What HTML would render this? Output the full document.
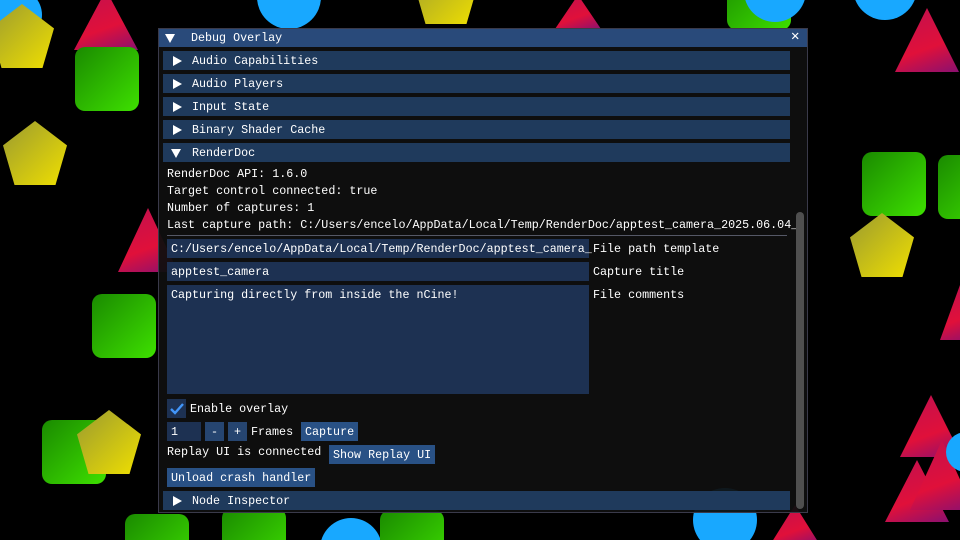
<!DOCTYPE html>
<html style="width:960px;height:540px;overflow:hidden"><head><meta charset="utf-8"><style>
*{margin:0;padding:0;box-sizing:border-box}
body{width:960px;height:540px;background:#000;position:relative;overflow:hidden;font-family:"Liberation Mono","DejaVu Sans Mono",monospace;font-size:11.7px;color:#fff}
.a{position:absolute}
.sq{position:absolute;width:64px;height:64px;border-radius:10px;background:linear-gradient(135deg,#1a8a00,#3ee000)}
.ci{position:absolute;border-radius:50%;background:#18a8ff}
.pent{position:absolute;width:64px;height:64px;background:linear-gradient(135deg,#9a9a30,#f0e000);clip-path:polygon(50% 0,100% 38%,82% 100%,18% 100%,0 38%)}
.rt{position:absolute;background:linear-gradient(160deg,#c01050,#e0103a 60%,#8a1070);clip-path:polygon(50% 0,100% 100%,0 100%)}
.win{position:absolute;left:158px;top:28px;width:650px;height:485px;background:rgba(15,15,15,.94);border:1px solid #3a3a4a}
.tb{position:absolute;left:0;top:0;width:648px;height:18px;background:#294a7a}
.hd{position:absolute;left:4px;width:627px;height:19px;background:#1f3a5c}
.t{position:absolute;white-space:pre;line-height:14px}
.in{position:absolute;background:#1d3152}
.btn{position:absolute;background:#295185;height:19px}
.arr{position:absolute;width:0;height:0;border-top:5px solid transparent;border-bottom:5px solid transparent;border-left:9px solid #fff}
.dn{position:absolute;width:0;height:0;border-left:5px solid transparent;border-right:5px solid transparent;border-top:9px solid #fff}
</style></head><body>
<div class="ci" style="left:-12px;top:-12px;width:54px;height:54px"></div>
<div class="pent" style="left:-10px;top:4px"></div>
<div class="rt" style="left:74px;top:-10px;width:64px;height:60px"></div>
<div class="sq" style="left:75px;top:47px"></div>
<div class="pent" style="left:3px;top:121px"></div>
<div class="ci" style="left:257px;top:-35px;width:64px;height:64px"></div>
<div class="pent" style="left:414px;top:-40px"></div>
<div class="rt" style="left:555px;top:-5px;width:46px;height:34px"></div>
<div class="sq" style="left:727px;top:-34px"></div>
<div class="ci" style="left:744px;top:-40px;width:62px;height:62px"></div>
<div class="ci" style="left:853px;top:-44px;width:64px;height:64px"></div>
<div class="rt" style="left:895px;top:8px;width:64px;height:64px"></div>
<div class="sq" style="left:862px;top:152px"></div>
<div class="pent" style="left:850px;top:213px"></div>
<div class="sq" style="left:938px;top:155px"></div>
<div class="rt" style="left:940px;top:285px;width:40px;height:55px"></div>
<div class="rt" style="left:118px;top:208px;width:60px;height:64px"></div>
<div class="sq" style="left:92px;top:294px"></div>
<div class="sq" style="left:42px;top:420px"></div>
<div class="pent" style="left:77px;top:410px"></div>
<div class="rt" style="left:900px;top:395px;width:62px;height:62px"></div>
<div class="rt" style="left:885px;top:460px;width:64px;height:62px"></div>
<div class="rt" style="left:910px;top:440px;width:64px;height:70px"></div>
<div class="ci" style="left:946px;top:432px;width:40px;height:40px"></div>
<div class="sq" style="left:125px;top:514px"></div>
<div class="sq" style="left:222px;top:508px"></div>
<div class="ci" style="left:320px;top:518px;width:62px;height:62px"></div>
<div class="sq" style="left:380px;top:510px"></div>
<div class="ci" style="left:693px;top:488px;width:64px;height:64px"></div>
<div class="rt" style="left:770px;top:505px;width:50px;height:40px"></div>

<div class="win">
<div class="tb"></div>
<div class="dn" style="left:6px;top:5px"></div>
<div class="t" style="left:32px;top:2px">Debug Overlay</div>
<div class="t" style="left:632px;top:1px;font-size:14px">✕</div>

<div class="hd" style="top:22px"></div><div class="arr" style="left:14px;top:27px"></div><div class="t" style="left:33px;top:25px">Audio Capabilities</div>
<div class="hd" style="top:45px"></div><div class="arr" style="left:14px;top:50px"></div><div class="t" style="left:33px;top:48px">Audio Players</div>
<div class="hd" style="top:68px"></div><div class="arr" style="left:14px;top:73px"></div><div class="t" style="left:33px;top:71px">Input State</div>
<div class="hd" style="top:91px"></div><div class="arr" style="left:14px;top:96px"></div><div class="t" style="left:33px;top:94px">Binary Shader Cache</div>
<div class="hd" style="top:114px"></div><div class="dn" style="left:12px;top:120px"></div><div class="t" style="left:33px;top:117px">RenderDoc</div>

<div class="t" style="left:8px;top:138px">RenderDoc API: 1.6.0</div>
<div class="t" style="left:8px;top:155px">Target control connected: true</div>
<div class="t" style="left:8px;top:172px">Number of captures: 1</div>
<div class="t" style="left:8px;top:189px">Last capture path: C:/Users/encelo/AppData/Local/Temp/RenderDoc/apptest_camera_2025.06.04_</div>
<div class="a" style="left:8px;top:206px;width:620px;height:1px;background:#555866"></div>

<div class="in" style="left:8px;top:210px;width:422px;height:19px"></div>
<div class="t" style="left:12px;top:213px">C:/Users/encelo/AppData/Local/Temp/RenderDoc/apptest_camera_</div>
<div class="t" style="left:434px;top:213px">File path template</div>
<div class="in" style="left:8px;top:233px;width:422px;height:19px"></div>
<div class="t" style="left:12px;top:236px">apptest_camera</div>
<div class="t" style="left:434px;top:236px">Capture title</div>
<div class="in" style="left:8px;top:256px;width:422px;height:109px"></div>
<div class="t" style="left:12px;top:259px">Capturing directly from inside the nCine!</div>
<div class="t" style="left:434px;top:259px">File comments</div>

<div class="in" style="left:8px;top:370px;width:19px;height:19px"></div>
<svg class="a" style="left:10px;top:372px" width="16" height="15"><path d="M2 8 L6 12 L14 3" stroke="#4296fa" stroke-width="2.4" fill="none"/></svg>
<div class="t" style="left:31px;top:373px">Enable overlay</div>

<div class="in" style="left:8px;top:393px;width:34px;height:19px"></div>
<div class="t" style="left:12px;top:396px">1</div>
<div class="btn" style="left:46px;top:393px;width:19px;background:#264570"></div><div class="t" style="left:52px;top:396px">-</div>
<div class="btn" style="left:69px;top:393px;width:19px;background:#264570"></div><div class="t" style="left:75px;top:396px">+</div>
<div class="t" style="left:92px;top:396px">Frames</div>
<div class="btn" style="left:142px;top:393px;width:57px"></div><div class="t" style="left:146px;top:396px">Capture</div>

<div class="t" style="left:8px;top:416px">Replay UI is connected</div>
<div class="btn" style="left:170px;top:416px;width:106px"></div><div class="t" style="left:174px;top:419px">Show Replay UI</div>

<div class="btn" style="left:8px;top:439px;width:148px"></div><div class="t" style="left:12px;top:442px">Unload crash handler</div>

<div class="hd" style="top:462px"></div><div class="arr" style="left:14px;top:467px"></div><div class="t" style="left:33px;top:465px">Node Inspector</div>

<div class="a" style="left:637px;top:183px;width:8px;height:297px;border-radius:4px;background:#4f4f4f"></div>
</div>
</body></html>
